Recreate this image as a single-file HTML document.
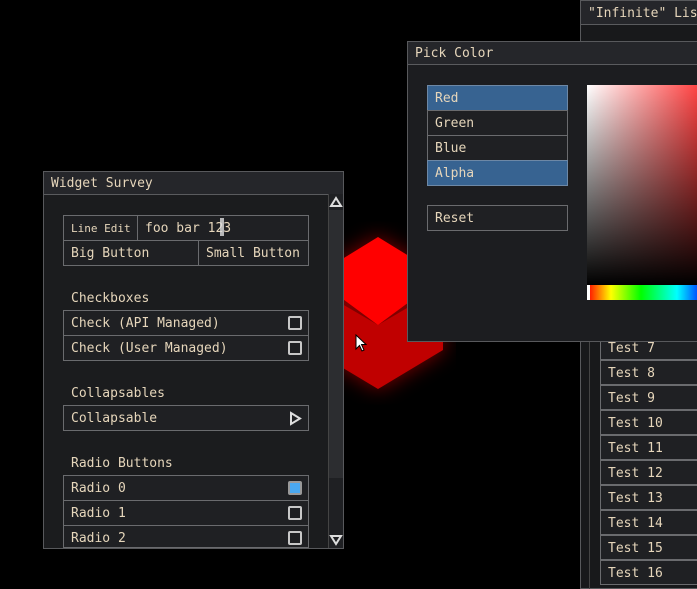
<!DOCTYPE html>
<html><head><style>
*{box-sizing:border-box;margin:0;padding:0}
html,body{width:697px;height:589px;overflow:hidden}
body{background:#000;position:relative;font-family:"DejaVu Sans Mono","Liberation Mono",monospace;font-size:13px;color:#e6d6bb}
.a{position:absolute}
.win{position:absolute;background:#1b1c1e;border:1px solid #58595c}
.title{position:absolute;left:0;right:0;top:0;height:23px;background:#25262a;border-bottom:1px solid #5a5b5e;padding:4px 0 0 7px;color:#e6d6bb}
.cell{position:absolute;background:#1f2023;border:1px solid #6a6b6e;padding:5px 0 0 7px;height:26px;white-space:nowrap}
.cb{position:absolute;right:6px;top:5px;width:14px;height:14px;border:2px solid #c8c8c8;border-radius:2px}
.h{position:absolute;color:#e6d6bb}
</style></head><body>
<div class="win" style="left:580px;top:0;width:130px;height:589px;background:#18191b">
<div class="title" style="height:24px;padding-top:5px">"Infinite" List</div>
</div>
<div class="a" style="left:589px;top:330px;width:1px;height:259px;background:#444"></div>
<div class="a" style="left:600px;top:335px">
<div class="cell" style="position:relative;width:110px;height:25px">Test 7</div>
<div class="cell" style="position:relative;width:110px;height:25px">Test 8</div>
<div class="cell" style="position:relative;width:110px;height:25px">Test 9</div>
<div class="cell" style="position:relative;width:110px;height:25px">Test 10</div>
<div class="cell" style="position:relative;width:110px;height:25px">Test 11</div>
<div class="cell" style="position:relative;width:110px;height:25px">Test 12</div>
<div class="cell" style="position:relative;width:110px;height:25px">Test 13</div>
<div class="cell" style="position:relative;width:110px;height:25px">Test 14</div>
<div class="cell" style="position:relative;width:110px;height:25px">Test 15</div>
<div class="cell" style="position:relative;width:110px;height:25px">Test 16</div>
</div>
<svg class="a" style="left:290px;top:220px" width="180" height="190" viewBox="290 220 180 190">
<defs><filter id="g"><feGaussianBlur stdDeviation="10"/></filter></defs>
<polygon points="378,237 443,277 443,350 378,389 313,350 313,277" fill="#f00" opacity="0.5" filter="url(#g)"/>
<polygon points="378,325 443,287 443,350 378,389 313,350 313,287" fill="#c00000"/>
<polygon points="378,237 443,277 378,325 313,277" fill="#ff0000"/>
</svg>
<div class="win" style="left:407px;top:41px;width:300px;height:301px;background:#1c1d20">
<div class="title" style="padding-top:4px">Pick Color</div>
</div>
<div class="cell" style="left:427px;top:85px;width:141px;height:26px;background:#376391;border-color:#6d88a6">Red</div>
<div class="cell" style="left:427px;top:110px;width:141px;height:26px">Green</div>
<div class="cell" style="left:427px;top:135px;width:141px;height:26px">Blue</div>
<div class="cell" style="left:427px;top:160px;width:141px;height:26px;background:#376391;border-color:#6d88a6">Alpha</div>
<div class="cell" style="left:427px;top:205px;width:141px;height:26px">Reset</div>
<div class="a" style="left:587px;top:85px;width:120px;height:200px;background:linear-gradient(to bottom,rgba(0,0,0,0),#000),linear-gradient(to right,#fff,#f33)"></div>
<div class="a" style="left:587px;top:285px;width:120px;height:15px;background:linear-gradient(to right,#f00,#ff0 20%,#0f0 45%,#0ff 75%,#00f)"></div>
<div class="a" style="left:587px;top:285px;width:3px;height:15px;background:#fff"></div>
<div class="win" style="left:43px;top:171px;width:301px;height:378px">
<div class="title">Widget Survey</div>
</div>
<div class="a" style="left:328px;top:194px;width:15px;height:354px;background:#1f2023;border-left:1px solid #444"></div>
<div class="a" style="left:329px;top:210px;width:14px;height:268px;background:#2c2d30"></div>
<svg class="a" style="left:329px;top:195px" width="14" height="14"><polygon points="7,3 12,11 2,11" fill="none" stroke="#ddd" stroke-width="2"/></svg>
<svg class="a" style="left:329px;top:533px" width="14" height="14"><polygon points="2,3 12,3 7,11" fill="none" stroke="#ddd" stroke-width="2"/></svg>
<div class="cell" style="left:63px;top:215px;width:75px;font-size:11px;padding-top:6px">Line Edit</div>
<div class="cell" style="left:137px;top:215px;width:172px">foo bar 123</div>
<div class="a" style="left:220px;top:218px;width:4px;height:18px;background:#ddd;opacity:.8"></div>
<div class="cell" style="left:63px;top:240px;width:136px">Big Button</div>
<div class="cell" style="left:198px;top:240px;width:111px">Small Button</div>
<div class="h" style="left:71px;top:291px">Checkboxes</div>
<div class="cell" style="left:63px;top:310px;width:246px">Check (API Managed)<div class="cb"></div></div>
<div class="cell" style="left:63px;top:335px;width:246px">Check (User Managed)<div class="cb"></div></div>
<div class="h" style="left:71px;top:386px">Collapsables</div>
<div class="cell" style="left:63px;top:405px;width:246px">Collapsable<svg class="a" style="right:6px;top:5px" width="13" height="15"><polygon points="2,2 11,7.5 2,13" fill="none" stroke="#ddd" stroke-width="2"/></svg></div>
<div class="h" style="left:71px;top:456px">Radio Buttons</div>
<div class="cell" style="left:63px;top:475px;width:246px">Radio 0<div class="cb" style="background:#4aa8f0;border-color:#999"></div></div>
<div class="cell" style="left:63px;top:500px;width:246px">Radio 1<div class="cb"></div></div>
<div class="cell" style="left:63px;top:525px;width:246px;height:23px">Radio 2<div class="cb"></div></div>
<svg class="a" style="left:355px;top:334px" width="14" height="20"><path d="M1,1 L1,15 L4.5,11.5 L7,17 L9,16 L6.5,10.5 L11,10.5 Z" fill="#fff" stroke="#000" stroke-width="1"/></svg>
</body></html>
